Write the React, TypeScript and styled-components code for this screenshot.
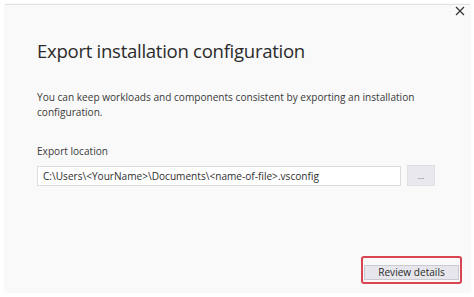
import styled, { createGlobalStyle } from "styled-components";

const GlobalStyle = createGlobalStyle`
  html, body {
    margin: 0;
    padding: 0;
    background: #ffffff;
  }
  body {
    font-family: "Open Sans", "Noto Sans", sans-serif;
  }
`;

const Page = styled.div`
  width: 474px;
  height: 297px;
  padding: 4px 4px 5px 5px;
  box-sizing: border-box;
`;

const Dialog = styled.div`
  position: relative;
  height: 100%;
  background: #f9f9f9;
  border-top: 1px solid #e2e2e2;
  box-shadow: 0 0 2px rgba(0, 0, 0, 0.08);
  display: flex;
  flex-direction: column;
  padding: 0 8px 8px 32px;
  box-sizing: border-box;
`;

const Close = styled.button`
  position: absolute;
  top: 0;
  right: 4px;
  width: 12px;
  height: 12px;
  padding: 0;
  border: none;
  background: transparent;
  display: flex;
  align-items: center;
  justify-content: center;
`;

const Title = styled.h1`
  margin: 33px 0 0;
  font-size: 18.6px;
  font-weight: 400;
  color: #2b2b2b;
  letter-spacing: -0.3px;
  line-height: 26px;
`;

const Description = styled.p`
  margin: 26px 0 0;
  width: 390px;
  font-size: 10.1px;
  line-height: 15px;
  color: #3a3a3a;
`;

const Label = styled.div`
  margin-top: 24px;
  font-size: 10.1px;
  line-height: 15px;
  color: #3a3a3a;
`;

const Row = styled.div`
  margin-top: 6px;
  display: flex;
  gap: 6px;
  align-items: center;
`;

const PathInput = styled.div`
  width: 364px;
  height: 20px;
  box-sizing: border-box;
  background: #ffffff;
  border: 1px solid #dcdcdc;
  padding: 0 5px;
  display: flex;
  align-items: center;
  font-size: 10.1px;
  color: #2f2f2f;
  white-space: nowrap;
`;

const Browse = styled.button`
  width: 28px;
  height: 21px;
  padding: 0 0 4px;
  border: 1px solid #e0e0e4;
  background: #e8e8ed;
  color: #555;
  font-size: 8px;
  font-family: inherit;
  display: flex;
  align-items: flex-end;
  justify-content: center;
`;

const Spacer = styled.div`
  flex: 1;
`;

const Footer = styled.div`
  display: flex;
  justify-content: flex-end;
`;

const Highlight = styled.div`
  border: 2px solid #d94452;
  border-radius: 3px;
  padding: 1px;
`;

const ReviewButton = styled.button`
  width: 95px;
  height: 15px;
  padding: 0;
  border: 1px solid #c9c9d2;
  background: #e6e6ec;
  color: #2b2b2b;
  font-family: inherit;
  font-size: 10.1px;
  line-height: 13px;
`;

export default function App() {
  return (
    <>
      <GlobalStyle />
      <Page>
        <Dialog>
          <Close aria-label="Close">
            <svg width="10" height="10" viewBox="0 0 10 10">
              <path d="M1 1L9 9M9 1L1 9" stroke="#333" strokeWidth="1.2" />
            </svg>
          </Close>
          <Title>Export installation configuration</Title>
          <Description>
            You can keep workloads and components consistent by exporting an
            installation configuration.
          </Description>
          <Label>Export location</Label>
          <Row>
            <PathInput>
              C:\Users\&lt;YourName&gt;\Documents\&lt;name-of-file&gt;.vsconfig
            </PathInput>
            <Browse>...</Browse>
          </Row>
          <Spacer />
          <Footer>
            <Highlight>
              <ReviewButton>Review details</ReviewButton>
            </Highlight>
          </Footer>
        </Dialog>
      </Page>
    </>
  );
}
